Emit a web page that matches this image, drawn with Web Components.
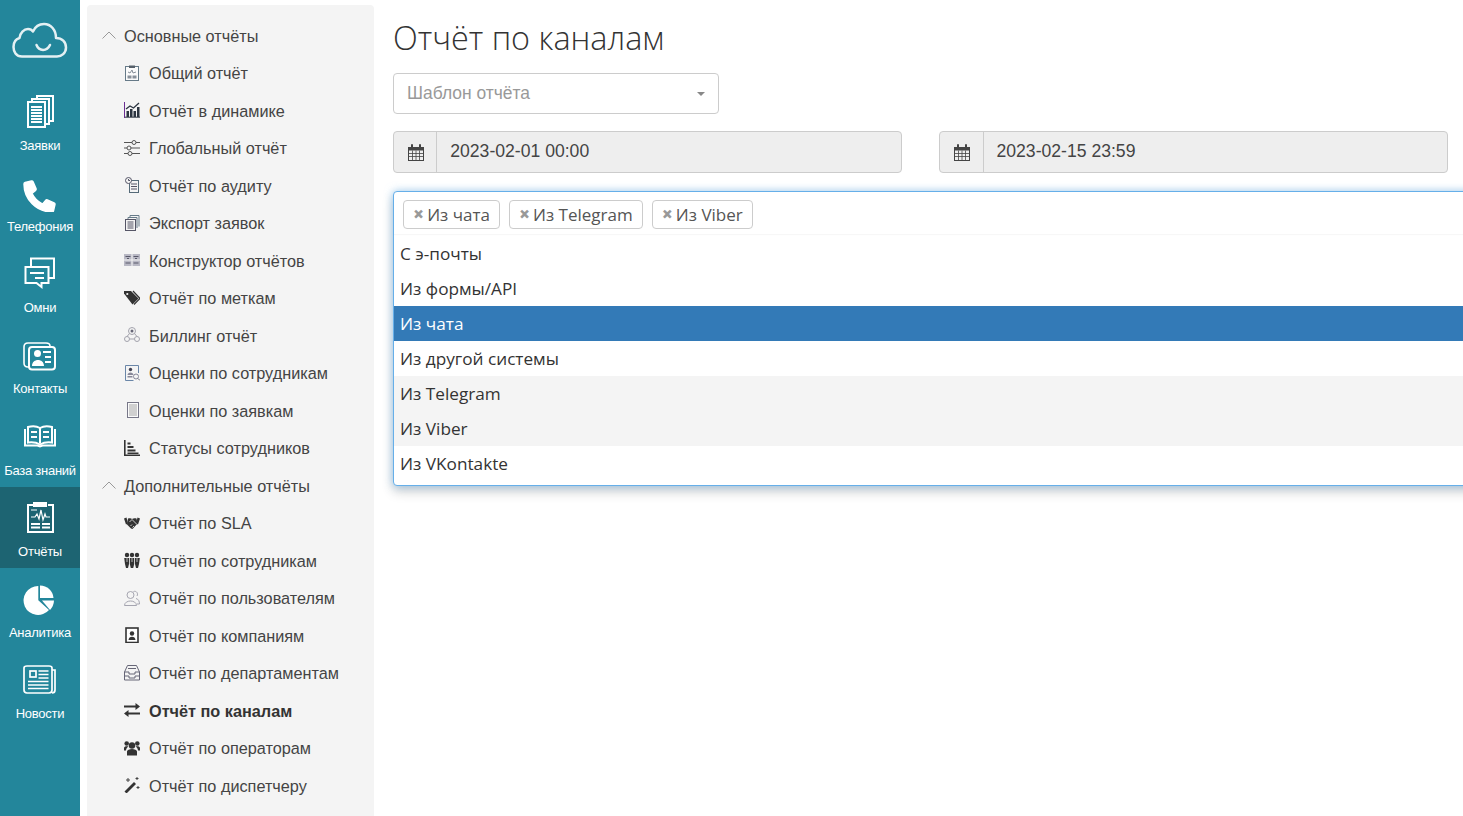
<!DOCTYPE html>
<html lang="ru">
<head>
<meta charset="utf-8">
<title>Отчёт по каналам</title>
<style>
html, body { margin: 0; height: 100%; overflow: hidden; background: #fff; }
body { display: flex; font-family: "Liberation Sans", Arial, sans-serif; color: #333; }
</style>
</head>
<body>
<app-rail>
  <rail-item icon="tickets">Заявки</rail-item>
  <rail-item icon="phone">Телефония</rail-item>
  <rail-item icon="omni">Омни</rail-item>
  <rail-item icon="contacts">Контакты</rail-item>
  <rail-item icon="book">База знаний</rail-item>
  <rail-item icon="reports" active>Отчёты</rail-item>
  <rail-item icon="pie">Аналитика</rail-item>
  <rail-item icon="news">Новости</rail-item>
</app-rail>

<report-menu>
  <menu-group>Основные отчёты</menu-group>
  <menu-item icon="summary">Общий отчёт</menu-item>
  <menu-item icon="bars">Отчёт в динамике</menu-item>
  <menu-item icon="sliders">Глобальный отчёт</menu-item>
  <menu-item icon="audit">Отчёт по аудиту</menu-item>
  <menu-item icon="export">Экспорт заявок</menu-item>
  <menu-item icon="builder">Конструктор отчётов</menu-item>
  <menu-item icon="tags">Отчёт по меткам</menu-item>
  <menu-item icon="billing">Биллинг отчёт</menu-item>
  <menu-item icon="rate">Оценки по сотрудникам</menu-item>
  <menu-item icon="rows">Оценки по заявкам</menu-item>
  <menu-item icon="status">Статусы сотрудников</menu-item>
  <menu-group>Дополнительные отчёты</menu-group>
  <menu-item icon="hands">Отчёт по SLA</menu-item>
  <menu-item icon="staff">Отчёт по сотрудникам</menu-item>
  <menu-item icon="users">Отчёт по пользователям</menu-item>
  <menu-item icon="company">Отчёт по компаниям</menu-item>
  <menu-item icon="inbox">Отчёт по департаментам</menu-item>
  <menu-item icon="swap" current>Отчёт по каналам</menu-item>
  <menu-item icon="group">Отчёт по операторам</menu-item>
  <menu-item icon="wand">Отчёт по диспетчеру</menu-item>
</report-menu>

<report-page>
  <span slot="title">Отчёт по каналам</span>
  <template-select>Шаблон отчёта</template-select>
  <date-row>
    <date-field>2023-02-01 00:00</date-field>
    <date-field>2023-02-15 23:59</date-field>
  </date-row>
  <channel-select>
    <channel-tag slot="tags">Из чата</channel-tag>
    <channel-tag slot="tags">Из Telegram</channel-tag>
    <channel-tag slot="tags">Из Viber</channel-tag>
    <channel-option>С э-почты</channel-option>
    <channel-option>Из формы/API</channel-option>
    <channel-option state="active">Из чата</channel-option>
    <channel-option>Из другой системы</channel-option>
    <channel-option state="picked">Из Telegram</channel-option>
    <channel-option state="picked">Из Viber</channel-option>
    <channel-option>Из VKontakte</channel-option>
  </channel-select>
</report-page>

<script>
// rail icons, drawn on the rail's own 48x36 box
const railIcons = {
  tickets: `<g fill="none" stroke="#fff" stroke-width="2"><path d="M21 4V1h16v25h-3"/><path d="M16 7V4h17v25h-3"/><rect x="12" y="7" width="17" height="25"/></g><path d="M15 12h11M15 15h11M15 18h11M15 21h11M15 24h11M15 27h11" stroke="#fff" stroke-width="1.800"/>`,
  phone: `<g transform="translate(8 5) scale(.0605) translate(512 0) scale(-1 1)"><path fill="#fff" stroke="#fff" stroke-width="24" stroke-linejoin="round" d="M493.4 24.6l-104-24c-11.3-2.6-22.9 3.3-27.5 13.9l-48 112c-4.2 9.8-1.4 21.3 6.9 28l60.6 49.6c-36 76.7-98.9 140.5-177.2 177.2l-49.6-60.6c-6.8-8.3-18.2-11.1-28-6.9l-112 48C3.9 366.5-2 378.1.6 389.4l24 104C27.1 504.2 36.7 512 48 512c256.1 0 464-207.5 464-464 0-11.2-7.700-20.900-18.600-23.400z"/></g>`,
  omni: `<g fill="none" stroke="#fff" stroke-width="2"><path d="M15 9V1.500h23V21h-5"/><path d="M9.500 10h23v16h-7v4l-5-4h-11z"/><path d="M14 16h14M19 21h9"/></g>`,
  contacts: `<g fill="none" stroke="#fff"><path d="M13 29h-1q-4 0-4-4V9q0-4 4-4h18q4 0 4 3" stroke-width="1.600"/><rect x="13" y="9" width="26" height="22.500" rx="3" stroke-width="2"/></g><circle cx="21.500" cy="15.500" r="3.500" fill="#fff"/><path d="M16 28c0-8 12-8 12 0zM27 13h8v2h-8zM29 18h6v2h-6zM29 23h6v2h-6z" fill="#fff"/>`,
  book: `<g fill="none" stroke="#fff" stroke-width="2" transform="translate(0 -1)"><path d="M9 10v16.500h12.500l2.500 1 2.500-1H39V10"/><path d="M12 8q7-2 12 1 5-3 12-1v15.500q-7-1-12 2-5-3-12-2z"/><path d="M24 9v15.500M15 13h6M15 18h6M27 13h6M27 18h6"/></g>`,
  reports: `<g fill="none" stroke="#fff" stroke-width="2"><path d="M17 4h-5v27h25V4h-5"/><rect x="18" y="2" width="12" height="3" fill="#fff"/></g><path d="M15 9h6" stroke="#fff"/><path d="M15 16h4l2-3 2 5 2-9 2 10 2-6 1 3h4" fill="none" stroke="#fff" stroke-width="1.200"/><path d="M15 22h9v2h-9zM15 25.500h9v2h-9zM26 22h8v2h-8zM26 25.500h8v2h-8z" fill="#fff"/>`,
  pie: `<path d="M22.300 4A14.500 14.500 0 1 0 33 28L22.300 18.200z" fill="#fff"/><path d="M24 3.500A13.500 13.500 0 0 1 37.500 16H24z" fill="#fff"/><path d="M26 18.500h12a15 15 0 0 1-4 9.500z" fill="#fff"/>`,
  news: `<g fill="none" stroke="#fff" stroke-width="1.700"><path d="M11 3h22q3 0 3 2v22q0 3-3 3H11q-3 0-3-3V5q0-2 3-2z"/><path d="M36 7h3v20q0 3-3 3"/><rect x="14" y="8" width="6" height="6"/><path d="M22.500 8h10M22.500 11.500h10M22.500 15h10M12 18.500h20.500M12 22h20.500M12 25.500h20.500"/></g>`
}

// report menu icons, 16x16
const menuIcons = {
  summary: `<rect x="1.500" y="1.500" width="13" height="14" fill="#fbfbfb" stroke="#667a88"/><path d="M5 .500h6v2.500H5z" fill="#56606a"/><path d="M4 7l2 1 2-3 1 3 3-1" fill="none" stroke="#88909a"/><path d="M3.500 10.500h4v3h-4zM8.500 10.500h4v3h-4z" fill="#88909a"/>`,
  bars: `<path d="M.500 0v16" stroke="#6a2d92"/><path d="M1 15.200h15" stroke="#2b3440"/><path d="M2.500 9h2.500v6H2.500zM6 7h2.500v8H6zM9.500 9H12v6H9.500zM13 5h2.500v10H13z" fill="#2b3440"/><path d="M2 7l4-3 3.500 2L15 1" fill="none" stroke="#2b3440" stroke-width="1.300"/>`,
  sliders: `<path d="M0 2.500h16M0 8h16M0 13.500h16" stroke="#555"/><circle cx="10" cy="2.500" r="2" fill="#f4f4f4" stroke="#555"/><circle cx="5" cy="8" r="2" fill="#f4f4f4" stroke="#555"/><circle cx="6" cy="13.500" r="2" fill="#f4f4f4" stroke="#555"/>`,
  audit: `<rect x="5.500" y="3.500" width="9" height="12" fill="none" stroke="#556a78"/><path d="M7 7h6M7 9.500h6M7 12h6" stroke="#556"/><circle cx="4.500" cy="3.500" r="3" fill="#f4f4f4" stroke="#556"/><path d="M4.500 2v1.500H6" fill="none" stroke="#556"/>`,
  export: `<path d="M6 2.500V.500h9v11" fill="none" stroke="#667a88"/><path d="M4 4.500v-2h9V13" fill="none" stroke="#667a88"/><rect x="1.500" y="4.500" width="10" height="11" fill="#f4f4f4" stroke="#556"/><path d="M3.500 7h6M3.500 9h6M3.500 11h6M3.500 13h6" stroke="#556"/>`,
  builder: `<path d="M0 2h16v12H0z" fill="#b8b8c4"/><path d="M8 2v12M0 8h16" stroke="#f4f4f4"/><path d="M1.500 4.500h5M9.500 4.500h5M1.500 11h5M9.500 11h5M3 6.500h2M11 6.500h2" stroke="#59596a"/>`,
  tags: `<path d="M0 3.500V1h7l7.500 7.500-6 6z" fill="#333"/><path d="M9 1l7 7.500-6 6" fill="none" stroke="#333" stroke-width="1.200"/><circle cx="3.300" cy="4" r="1.100" fill="#f4f4f4"/>`,
  billing: `<g fill="none" stroke="#a3a3ad"><circle cx="8" cy="4" r="3.500"/><circle cx="3" cy="12" r="2.500"/><circle cx="13" cy="12" r="2.500"/><path d="M5.500 6.500L3 9.500M10.500 6.500L13 9.500M5.500 12h5"/></g><circle cx="8" cy="4" r="1.500" fill="#667"/>`,
  rate: `<path d="M14.500 8V.500h-13v15h8" fill="none" stroke="#6a86a8"/><circle cx="6.500" cy="4.500" r="1.700" fill="#445"/><path d="M3.500 10c0-3.500 6-3.500 6 0zM3.500 11h5v1.500h-5z" fill="#889"/><circle cx="12" cy="11.500" r="2.500" fill="#f4f4f4" stroke="#889"/><path d="M14 13.500l2 2" stroke="#667"/>`,
  rows: `<rect x="3.500" y=".500" width="11" height="15" fill="#fbfbfb" stroke="#778"/><path d="M5 3h8M5 5h8M5 7h8M5 9h8M5 11h8M5 13h8" stroke="#a5a5a5"/>`,
  status: `<path d="M.800 0v15.200H16" fill="none" stroke="#333" stroke-width="1.600"/><path d="M3.500 2.500h3v2h-3zM3.500 6h6v2h-6zM3.500 9.500h8v2h-8zM3.500 12.500h11v1.500h-11z" fill="#333"/>`,
  hands: `<path d="M0 3.500l2.500-1 1.500 6-2 1zM16 3.500l-2.500-1-1.500 6 2 1z" fill="#333"/><path d="M4 3.500C6 3 7 3 8 4c1.500-1 3-1 4.500-.5l1 5-5 5.500-1.500-.5-4-4z" fill="#333"/><path d="M5.500 7L8 4.500l4.500 4.500M6.500 11L8 9.500M8.500 12.500L10 11" fill="none" stroke="#f4f4f4" stroke-width=".800"/>`,
  staff: `<g fill="#333"><circle cx="3" cy="3" r="2.200"/><circle cx="8" cy="3" r="2.200"/><circle cx="13" cy="3" r="2.200"/><path d="M.200 6h4.800v6l-1 4H2l-1-4zM5.800 6h4.400v6l-1 4H6.800l-1-4zM11 6h4.800l-.800 6-1 4h-2l-1-4z"/></g><path d="M3 6v4M8 6v4M13 6v4" stroke="#f4f4f4" stroke-width=".700"/>`,
  users: `<g fill="none" stroke="#a5a5b0"><circle cx="6.500" cy="5" r="3.500"/><path d="M.500 15.500c0-6 12-6 12 0z"/><path d="M9.500 1.500c3-1 5 2 3.500 4.500M12 8.500c2.500.500 3.500 3 3.500 5.500H13"/></g>`,
  company: `<rect x="2" y="1" width="12" height="14.500" fill="#fff" stroke="#333" stroke-width="1.600"/><circle cx="8" cy="6.500" r="2.200" fill="#333"/><path d="M4.500 13c0-4.500 7-4.500 7 0z" fill="#333"/>`,
  inbox: `<g fill="none" stroke="#667"><path d="M.500 7L3.500.500h9L15.500 7v8h-15z"/><path d="M.500 7h4.500v2h6V7h4.500M.500 11h4.500v2h6v-2h4.500M4 3.500h8"/></g>`,
  swap: `<path d="M0 4.500h13.500M16 11.500H2.500" stroke="#333" stroke-width="2"/><path d="M11.500 1l4.500 3.500-4.500 3.500zM4.500 8L0 11.500 4.500 15z" fill="#333"/>`,
  group: `<g fill="#333"><circle cx="8" cy="5.500" r="3.200"/><circle cx="2.700" cy="3.500" r="2.300"/><circle cx="13.300" cy="3.500" r="2.300"/><path d="M3 15.500v-4c0-3.500 10-3.500 10 0v4zM0 10.500V8c0-2 3-2 4.500-1.500-1.500 1-2.500 2.500-2.500 4zM16 10.500V8c0-2-3-2-4.500-1.500 1.500 1 2.500 2.500 2.500 4z"/></g>`,
  wand: `<path d="M.500 14.500L10 5l2 2-9.500 9.500z" fill="#333"/><path d="M4 1v4M2 3h4M13 0v3M11.500 1.500h3M14 9v3M12.500 10.500h3" stroke="#444"/>`
}

customElements.define('app-rail', class extends HTMLElement {
  constructor () {
    super()
    this.attachShadow({ mode: 'open' }).innerHTML = `
      <style>
        :host { display: flex; flex-direction: column; flex: none; width: 80px; height: 100%; background: #23869b; }
        .logo { height: 80.65px; padding-top: 1px; box-sizing: border-box; display: flex; align-items: center; justify-content: center; }
      </style>
      <div class="logo">
        <svg width="56" height="38" viewBox="12 21 56 38" fill="none" stroke="#fff" stroke-opacity=".88" stroke-width="2.500" stroke-linejoin="round" stroke-linecap="round">
          <path d="M22 55.500C16 55.500 13.500 50.500 13.500 46 13.500 41 16 38 19.500 37 20 32 24 28 28 28 30 28 32 29 33 30.500 35 26 39 23 44 23 51 23 56 29 56 37 62 37 66 41 66 46.500 66 52 61.500 55.500 57 55.500Z"/>
          <path d="M36.500 44C39 50.500 47 50.500 50 44"/>
        </svg>
      </div>
      <slot></slot>`
  }
})

customElements.define('rail-item', class extends HTMLElement {
  constructor () {
    super()
    this.attachShadow({ mode: 'open' }).innerHTML = `
      <style>
        :host { display: flex; flex-direction: column; align-items: center; height: 81.25px; padding-top: 14px; box-sizing: border-box; color: #fff; font-size: 13px; letter-spacing: -.25px; }
        :host([active]) { background: #1d6472; }
        svg { display: block; width: 48px; height: 36px; margin-bottom: 7px; }
        span { line-height: 15px; white-space: nowrap; }
      </style>
      <svg viewBox="0 0 48 36">${railIcons[this.getAttribute('icon')] || ''}</svg>
      <span><slot></slot></span>`
  }
})

customElements.define('report-menu', class extends HTMLElement {
  constructor () {
    super()
    this.attachShadow({ mode: 'open' }).innerHTML = `
      <style>
        :host { display: flex; flex-direction: column; flex: none; width: 287px; margin: 5px 0 0 7px; padding-top: 12.5px; box-sizing: border-box; background: #f4f4f4; border-radius: 4px 4px 0 0; font-size: 16.25px; }
      </style>
      <slot></slot>`
  }
})

customElements.define('menu-group', class extends HTMLElement {
  constructor () {
    super()
    this.attachShadow({ mode: 'open' }).innerHTML = `
      <style>
        :host { display: flex; align-items: center; height: 37.5px; padding-left: 15px; color: #444; }
        svg { width: 14px; height: 8px; margin-right: 8px; flex: none; position: relative; top: -1px; }
      </style>
      <svg viewBox="0 0 14 8"><path d="M.5 7.500L7 1l6.500 6.500" fill="none" stroke="#999"/></svg>
      <slot></slot>`
  }
})

customElements.define('menu-item', class extends HTMLElement {
  constructor () {
    super()
    this.attachShadow({ mode: 'open' }).innerHTML = `
      <style>
        :host { display: flex; align-items: center; height: 37.5px; padding-left: 37px; color: #444; white-space: nowrap; }
        :host([current]) { font-weight: 700; color: #333; }
        svg { width: 16px; height: 16px; margin-right: 9px; flex: none; position: relative; top: -1px; }
      </style>
      <svg viewBox="0 0 16 16">${menuIcons[this.getAttribute('icon')] || ''}</svg>
      <slot></slot>`
  }
})

customElements.define('report-page', class extends HTMLElement {
  constructor () {
    super()
    this.attachShadow({ mode: 'open' }).innerHTML = `
      <style>
        :host { display: flex; flex-direction: column; flex: 1; min-width: 0; padding: 0 15px 0 19px; }
        h1 { margin: 16px 0 14px; font: 300 32.4px/43px "Open Sans", sans-serif; color: #333; white-space: nowrap; }
      </style>
      <h1><slot name="title"></slot></h1>
      <slot></slot>`
  }
})

customElements.define('template-select', class extends HTMLElement {
  constructor () {
    super()
    this.attachShadow({ mode: 'open' }).innerHTML = `
      <style>
        :host { display: flex; align-items: center; justify-content: space-between; width: 326px; height: 41px; box-sizing: border-box; padding: 0 13px; margin-bottom: 17px; background: #fff; border: 1px solid #ccc; border-radius: 4px; color: #999; font-size: 17.45px; }
        i { width: 0; height: 0; border: 4px solid transparent; border-top-color: #888; border-bottom: 0; }
      </style>
      <span><slot></slot></span><i></i>`
  }
})

customElements.define('date-row', class extends HTMLElement {
  constructor () {
    super()
    this.attachShadow({ mode: 'open' }).innerHTML = `
      <style>
        :host { display: grid; grid-template-columns: 1fr 1fr; column-gap: 37.5px; margin-bottom: 18px; }
      </style>
      <slot></slot>`
  }
})

customElements.define('date-field', class extends HTMLElement {
  constructor () {
    super()
    this.attachShadow({ mode: 'open' }).innerHTML = `
      <style>
        :host { display: flex; height: 42px; box-sizing: border-box; background: #eeeeee; border: 1px solid #ccc; border-radius: 4px; color: #444; font-size: 17.6px; }
        .addon { width: 43.25px; box-sizing: border-box; padding-left: 14px; flex: none; display: flex; align-items: center; border-right: 1px solid #ccc; }
        .value { display: flex; align-items: center; padding-left: 13px; position: relative; top: -1px; }
      </style>
      <div class="addon">
        <svg width="16" height="17" viewBox="0 0 16 17">
          <path d="M0 3h16v14H0z" fill="#444"/>
          <path d="M1 6.500h14V16H1z" fill="#eee"/>
          <path d="M1 9.500h14M1 12.500h14M4.500 6.500V16M8 6.500V16M11.500 6.500V16" stroke="#444" stroke-width=".8"/>
          <path d="M4 1v3M12 1v3" stroke="#444" stroke-width="2" stroke-linecap="round"/>
        </svg>
      </div>
      <div class="value"><slot></slot></div>`
  }
})

customElements.define('channel-select', class extends HTMLElement {
  constructor () {
    super()
    this.attachShadow({ mode: 'open' }).innerHTML = `
      <style>
        :host { display: block; margin-right: -60px; background: #fff; border: 1px solid #66afe9; border-radius: 4px; box-shadow: 0 0 8px rgba(102, 175, 233, .6), 0 6px 12px rgba(0, 0, 0, .18); font: 17.2px "Open Sans", sans-serif; color: #333; }
        .tags { display: flex; gap: 9px; height: 42px; box-sizing: border-box; padding: 8px 9px 0; box-shadow: 0 1px 1px rgba(0, 0, 0, .03); font-size: 17px; }
        .options { padding: 2px 0 4px; }
      </style>
      <div class="tags"><slot name="tags"></slot></div>
      <div class="options"><slot></slot></div>`
  }
})

customElements.define('channel-tag', class extends HTMLElement {
  constructor () {
    super()
    this.attachShadow({ mode: 'open' }).innerHTML = `
      <style>
        :host { display: flex; align-items: center; height: 29px; box-sizing: border-box; padding: 0 9px; background: #fff; border: 1px solid #ccc; border-radius: 4px; color: #555; white-space: nowrap; }
        b { color: #999; font-size: 19px; font-weight: 800; line-height: 1; margin-right: 3px; }
      </style>
      <b>×</b><span><slot></slot></span>`
  }
})

customElements.define('channel-option', class extends HTMLElement {
  constructor () {
    super()
    this.attachShadow({ mode: 'open' }).innerHTML = `
      <style>
        :host { display: flex; align-items: center; height: 35px; padding-left: 6px; white-space: nowrap; }
        :host([state="active"]) { background: #337ab7; color: #fff; }
        :host([state="picked"]) { background: #f4f4f4; }
      </style>
      <slot></slot>`
  }
})
</script>
</body>
</html>
